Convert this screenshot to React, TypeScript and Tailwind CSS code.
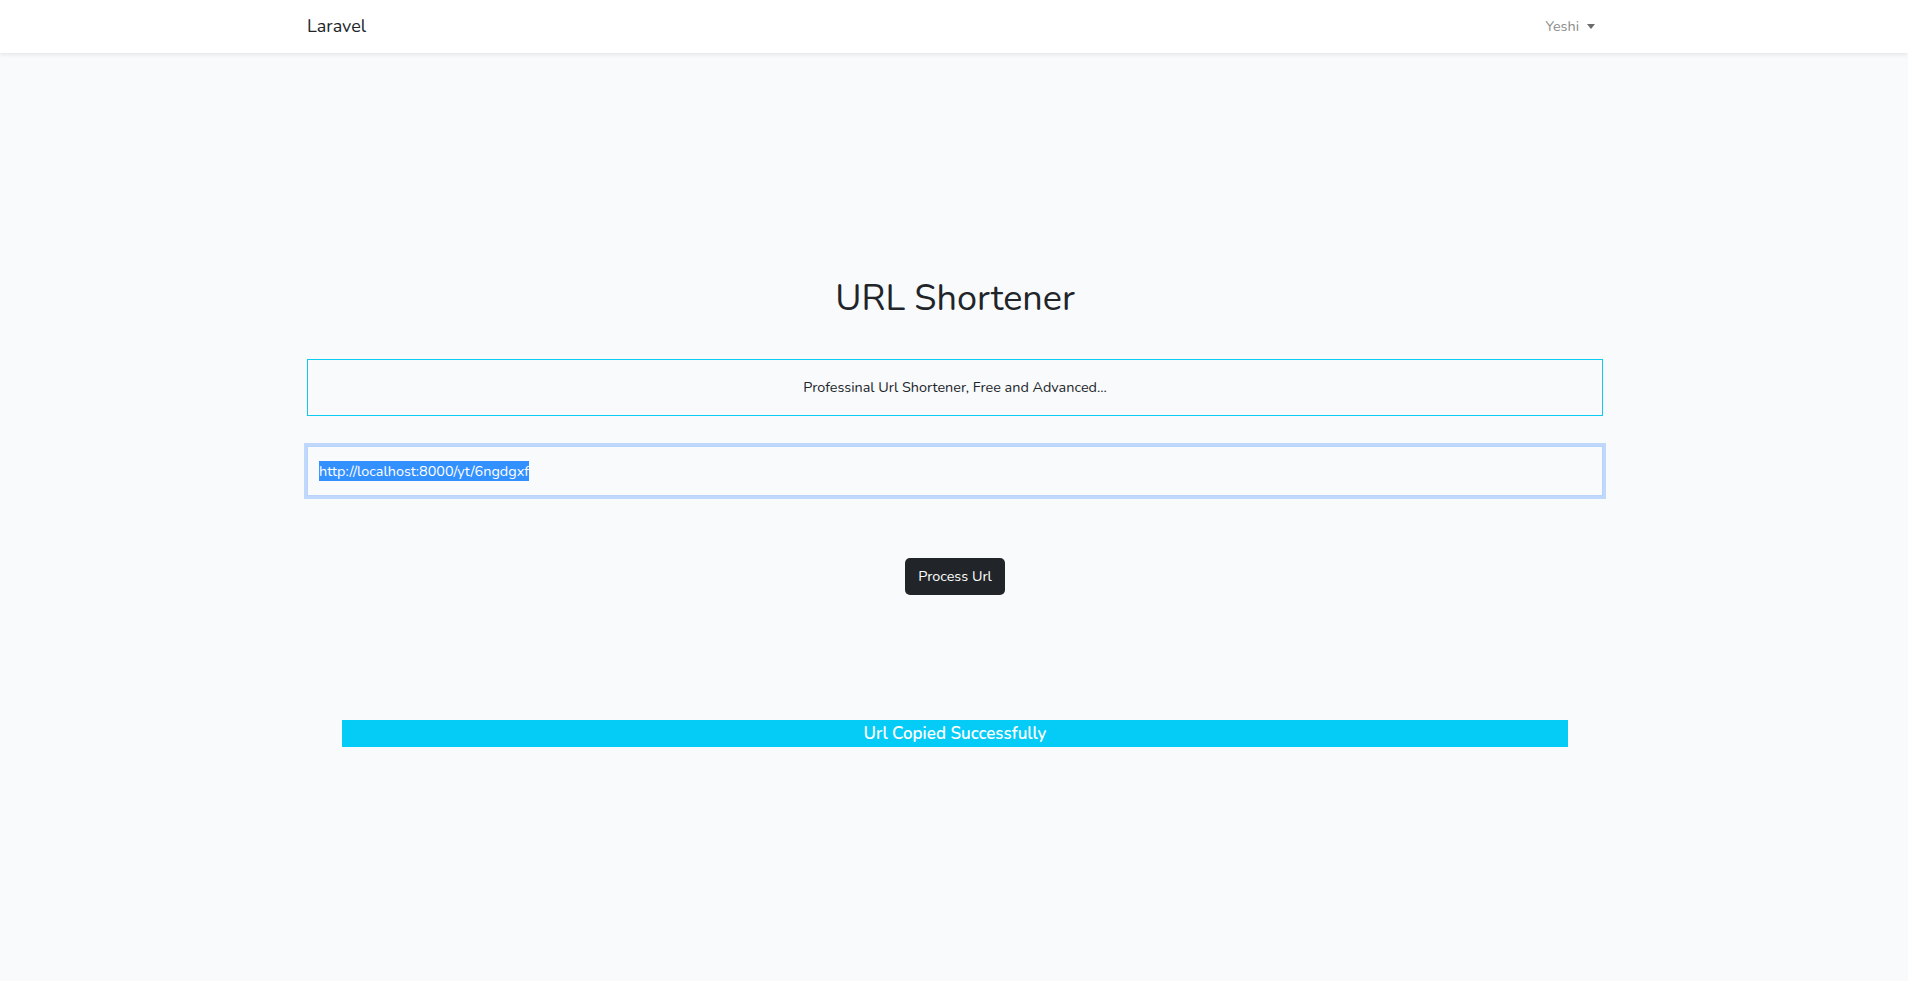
import React from "react";

export default function App() {
  return (
    <div
      className="min-h-[981px] bg-[#f8fafc] text-[#212529]"
      style={{ fontFamily: "Nunito, Lato, 'Open Sans', sans-serif" }}
    >
      <nav className="bg-white shadow-[0_2px_4px_rgba(0,0,0,0.075)] relative z-10">
        <div className="mx-auto w-[1320px] pl-[13px] pr-[11px] h-[53px] flex items-center justify-between">
          <span className="text-[18px] text-[#212529]">Laravel</span>
          <span className="flex items-center gap-[8px] pr-[8px] text-[14.4px] text-[#8c8c8c]">
            Yeshi
            <span className="inline-block w-0 h-0 border-l-[4px] border-r-[4px] border-t-[5px] border-l-transparent border-r-transparent border-t-[#6b6b6b]" />
          </span>
        </div>
      </nav>

      <main className="mx-auto w-[1320px] pl-[13px] pr-[11px] pt-[224px]">
        <h1 className="text-center text-[36px] leading-[43px] font-normal">URL Shortener</h1>

        <div className="mt-[39px] border border-[#0dcaf0] p-4 text-center text-[14.4px] leading-[23px]">
          Professinal Url Shortener, Free and Advanced...
        </div>

        <div className="mt-[30px] h-[50px] border border-[#b9d4fb] shadow-[0_0_0_3px_#bfd8fc] flex items-center px-[11px]">
          <span className="bg-[#3390ff] text-white text-[14.4px] leading-[20px]">
            http://localhost:8000/yt/6ngdgxf
          </span>
        </div>

        <div className="mt-[62px] flex justify-center">
          <button className="h-[37px] w-[100px] rounded-[5px] bg-[#212529] text-white text-[14.4px]">
            Process Url
          </button>
        </div>

        <div className="mt-[125px] mx-auto w-[1226px] h-[27px] bg-[#05cbf7] flex items-center justify-center">
          <span className="text-white font-semibold text-[17px] leading-[27px]">Url Copied Successfully</span>
        </div>
      </main>
    </div>
  );
}
